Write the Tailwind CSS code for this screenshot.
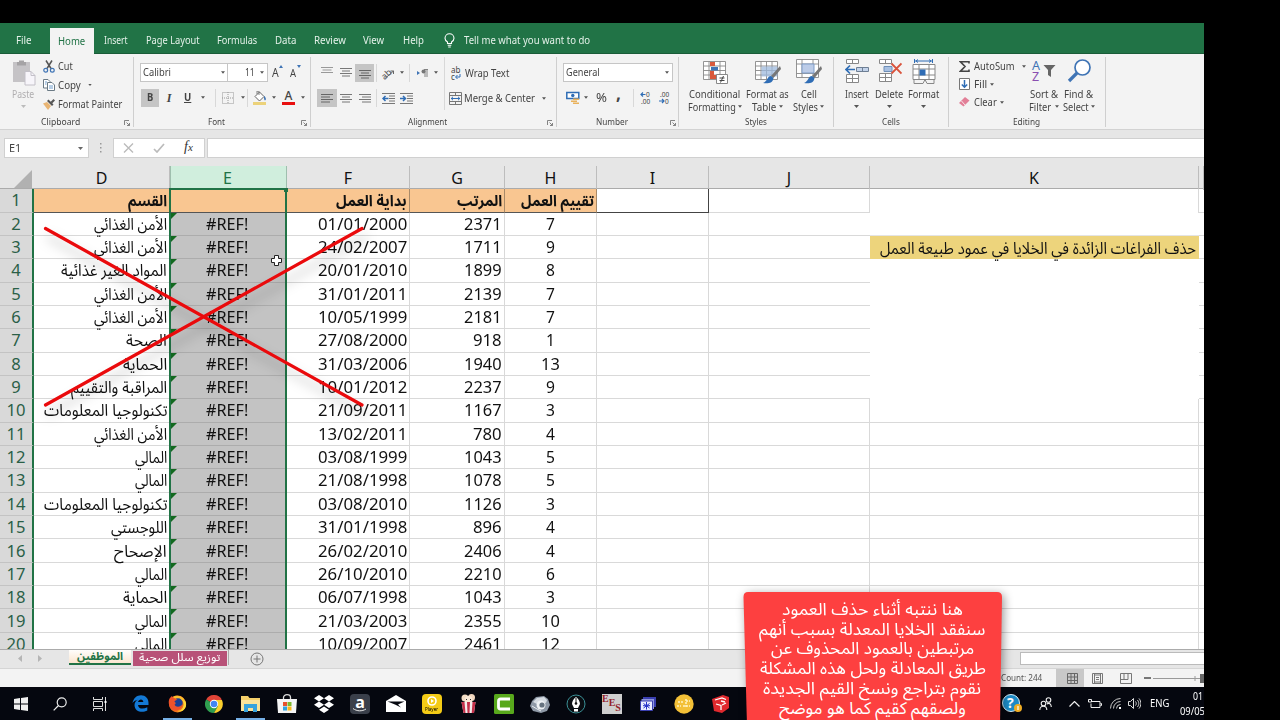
<!DOCTYPE html>
<html lang="en">
<head>
    <meta charset="UTF-8">
    <meta name="viewport" content="width=device-width, initial-scale=1.0">
    <title>Excel - Employees</title>
    <script src="https://cdn.jsdelivr.net/npm/@tailwindcss/browser@4"></script>
</head>
<body class="bg-black overflow-hidden font-['Noto_Sans','Noto_Sans_Arabic','DejaVu_Sans',sans-serif]">
<div class="relative w-[1280px] h-[720px] overflow-hidden pt-[23px]">
<div class="w-[1204px] h-[697px] flex flex-col overflow-hidden bg-[#e6e6e6]">

    <!-- Ribbon tabs -->
    <nav class="h-[31px] shrink-0 bg-[#217346] border-b border-[#1a5c38] flex items-end text-[11px] text-[#e4f1e9]">
        <div class="w-[50px] h-[26px] pl-4 pt-px flex items-center shrink-0"><span data-w="16">File</span></div>
        <div class="w-[44px] h-[26px] -mb-px bg-[#f3f3f3] text-[#217346] flex items-center justify-center shrink-0"><span data-w="27">Home</span></div>
        <div class="h-[26px] pl-[10px] pt-px flex items-center">
            <div class="w-[42px]"><span data-w="24">Insert</span></div>
            <div class="w-[71px]"><span data-w="54">Page Layout</span></div>
            <div class="w-[58px]"><span data-w="40">Formulas</span></div>
            <div class="w-[39px]"><span data-w="21">Data</span></div>
            <div class="w-[49px]"><span data-w="32">Review</span></div>
            <div class="w-[40px]"><span data-w="21">View</span></div>
            <div class="w-[41px]"><span data-w="21">Help</span></div>
            <div class="w-[20px]">
                <svg class="w-[11px] h-[15px]" viewBox="0 0 11 15" fill="none" stroke="#fff" stroke-width="1.1"><path d="M3.5 10.5V9C2 8 1 6.800 1 5.200a4.500 4.500 0 0 1 9 0C10 6.800 9 8 7.500 9v1.500zM3.700 12.300h3.600M4.200 14h2.600"/></svg>
            </div>
            <span data-w="126">Tell me what you want to do</span>
        </div>
    </nav>

    <!-- Ribbon -->
    <section class="h-[76px] shrink-0 bg-[#f3f3f3] border-b border-[#d2d2d2] flex pt-[3px] text-[11px] text-[#444]">

        <!-- Clipboard -->
        <div class="w-[134px] h-[70px] border-r border-[#cfcfcf] flex flex-col shrink-0">
            <div class="h-[58px] flex shrink-0">
                <div class="w-[43px] pl-[3px] pt-[2px] flex flex-col items-center text-[#b0aeb0]">
                    <svg class="w-[26px] h-[27px]" viewBox="0 0 26 27"><path d="M3 3h17v20H3z" fill="#c5c3c6"/><path d="M7 3h2V1.500h5V3h2v3.500H7z" fill="#a5a3a5"/><path d="M15 12.500h6l4 4V26H15z" fill="#f7f5fa" stroke="#c3c0c8"/><path d="M21 12.500v4h4" fill="none" stroke="#c3c0c8"/></svg>
                    <span class="leading-[15px]" data-w="22">Paste</span>
                    <svg class="w-[5px] h-[3px] mt-[4px]" viewBox="0 0 5 3"><path d="M0 0h5L2.500 3z" fill="#bbb"/></svg>
                </div>
                <div class="flex flex-col">
                    <div class="h-[18px] flex items-center">
                        <svg class="w-[12px] h-[13px] mr-[3px]" viewBox="0 0 12 13" fill="none"><path d="M3 .5l5 8M9 .5l-5 8" stroke="#555" stroke-width="1.500"/><circle cx="2.700" cy="10.200" r="1.900" stroke="#3f74b5" stroke-width="1.200"/><circle cx="9.300" cy="10.200" r="1.900" stroke="#3f74b5" stroke-width="1.200"/></svg>
                        <span data-w="15">Cut</span>
                    </div>
                    <div class="h-[20px] flex items-center">
                        <svg class="w-[12px] h-[12px] mr-[3px]" viewBox="0 0 12 12" fill="#fff" stroke="#6b7a85"><path d="M.5.5h4.500l2 2v6.500H.5z"/><path d="M4.500 3.500h4.500l2.500 2.500v5.500h-7z"/><path d="M6 7h4M6 9h4M2 3h2M2 5h1.500" stroke="#4d86c0" stroke-width=".8"/></svg>
                        <span data-w="23">Copy</span>
                        <svg class="w-[4px] h-[2px] ml-[7px]" viewBox="0 0 5 3"><path d="M0 0h5L2.500 3z" fill="#555"/></svg>
                    </div>
                    <div class="h-[18px] flex items-center">
                        <svg class="w-[12px] h-[11px] mr-[3px]" viewBox="0 0 12 11"><path d="M0 4.500L4 3l4 4-3 4z" fill="#e9b574"/><path d="M4 2l1.500-1.500 5 5L9 7z" fill="#555"/><path d="M7.500 3L10.500 0 12 1.500 9 4.500z" fill="#555"/></svg>
                        <span data-w="64">Format Painter</span>
                    </div>
                </div>
            </div>
            <div class="h-[15px] shrink-0 flex items-center justify-between pl-[41px] pr-[3px] text-[9.5px]">
                <span data-w="39">Clipboard</span>
                <svg class="w-[6px] h-[6px]" viewBox="0 0 6 6" fill="none" stroke="#777" stroke-width=".9"><path d="M.5 5V.5H5M2.500 2.500l3 3M5.500 3v2.500H3"/></svg>
            </div>
        </div>

        <!-- Font -->
        <div class="w-[177px] h-[70px] border-r border-[#cfcfcf] flex flex-col shrink-0">
            <div class="h-[31px] shrink-0 pl-[6px] flex items-center">
                <div class="w-[88px] h-[19px] bg-white border border-[#c6c6c6] flex items-center justify-between pl-[2px] pr-[2px]">
                    <span data-w="28">Calibri</span>
                    <svg class="w-[4px] h-[3px]" viewBox="0 0 5 3"><path d="M0 0h5L2.500 3z" fill="#555"/></svg>
                </div>
                <div class="w-[40px] h-[19px] bg-white border border-l-0 border-[#c6c6c6] flex items-center justify-end gap-[5px] pr-[3px]">
                    <span data-w="10">11</span>
                    <svg class="w-[4px] h-[3px]" viewBox="0 0 5 3"><path d="M0 0h5L2.500 3z" fill="#555"/></svg>
                </div>
                <div class="w-[19px] flex justify-center items-start"><span class="leading-[15px] text-[12px]" data-w="7">A</span><svg class="w-[4px] h-[3px]" viewBox="0 0 4 3"><path d="M0 3L2 0l2 3z" fill="#3f74b5"/></svg></div>
                <div class="w-[17px] flex justify-center items-start"><span class="leading-[15px] text-[11px]" data-w="6">A</span><svg class="w-[4px] h-[3px]" viewBox="0 0 4 3"><path d="M0 0L2 3l2-3z" fill="#3f74b5"/></svg></div>
            </div>
            <div class="h-[27px] shrink-0 pl-[7px] pb-[8px] pt-[0px] flex items-center">
                <div class="w-[18px] h-[18px] bg-[#c5c5c5] flex items-center justify-center font-bold"><span data-w="6">B</span></div>
                <div class="w-[20px] flex justify-center font-['Liberation_Serif',serif] italic font-bold text-[12px]">I</div>
                <div class="w-[17px] flex justify-center font-bold underline"><span data-w="7">U</span></div>
                <div class="w-[13px] flex justify-center"><svg class="w-[4px] h-[3px]" viewBox="0 0 5 3"><path d="M0 0h5L2.500 3z" fill="#555"/></svg></div>
                <div class="w-[7px] h-[18px] border-r border-[#d8d8d8]"></div>
                <div class="w-[24px] flex justify-center"><svg class="w-[12px] h-[12px]" viewBox="0 0 12 12" fill="none" stroke="#999"><path d="M.5.500h11v11H.5zM6 0v12M0 6h12" stroke-dasharray="1 1"/></svg></div>
                <div class="w-[6px] flex justify-center"><svg class="w-[4px] h-[3px]" viewBox="0 0 5 3"><path d="M0 0h5L2.500 3z" fill="#555"/></svg></div>
                <div class="w-[6px] h-[18px] border-r border-[#d8d8d8] -ml-[4px]"></div>
                <div class="w-[24px] flex justify-center"><svg class="w-[14px] h-[14px]" viewBox="0 0 14 14"><path d="M2 5.500L6.500 1l4.500 4.500L6.500 10z" fill="#fff" stroke="#666"/><path d="M4 3V0h2v4" fill="none" stroke="#666" stroke-width=".8"/><path d="M11.500 5c1.500 2 2 4 .5 4.500-1-.5-1-2-1-4z" fill="#3f74b5"/><path d="M0 11h13v3H0z" fill="#ecd27a"/></svg></div>
                <div class="w-[4px] flex justify-center"><svg class="w-[4px] h-[3px]" viewBox="0 0 5 3"><path d="M0 0h5L2.500 3z" fill="#555"/></svg></div>
                <div class="w-[25px] flex flex-col items-center"><span class="leading-[10px] h-[10px] text-[12px] font-medium" data-w="8">A</span><i class="block w-[13px] h-[3px] mt-px bg-[#e80f0f]"></i></div>
                <svg class="w-[4px] h-[3px]" viewBox="0 0 5 3"><path d="M0 0h5L2.500 3z" fill="#555"/></svg>
            </div>
            <div class="h-[15px] shrink-0 flex items-center justify-between pl-[74px] pr-[3px] text-[9.5px]">
                <span data-w="17">Font</span>
                <svg class="w-[6px] h-[6px]" viewBox="0 0 6 6" fill="none" stroke="#777" stroke-width=".9"><path d="M.5 5V.5H5M2.500 2.500l3 3M5.500 3v2.500H3"/></svg>
            </div>
        </div>

        <!-- Alignment -->
        <div class="w-[246px] h-[70px] border-r border-[#cfcfcf] flex flex-col shrink-0">
            <div class="h-[58px] shrink-0 flex">
                <div class="w-[134px] h-[53px] border-r border-[#d8d8d8] flex flex-col">
                    <div class="h-[29px] pl-[6px] pt-[2px] flex items-center">
                        <div class="w-[20px] h-[18px] flex justify-center pt-[3px]"><svg class="w-[12px] h-[7px]" viewBox="0 0 12 7"><path d="M0 .5h12M1.500 3h9M0 5.500h12" stroke="#999"/></svg></div>
                        <div class="w-[18px] h-[18px] flex justify-center items-center"><svg class="w-[12px] h-[9px]" viewBox="0 0 12 9"><path d="M0 .5h12M2 3h8M0 5.500h12M2 8h8" stroke="#777"/></svg></div>
                        <div class="w-[19px] h-[18px] bg-[#c5c5c5] flex justify-center items-end pb-[3px]"><svg class="w-[12px] h-[9px]" viewBox="0 0 12 9"><path d="M0 .5h12M2 3h8M0 5.500h12M2 8h8" stroke="#666"/></svg></div>
                        <div class="w-[3px] h-[18px] border-r border-[#d8d8d8]"></div>
                        <div class="w-[23px] flex justify-center"><svg class="w-[13px] h-[12px] overflow-visible" viewBox="0 0 13 12"><text x="-1" y="10" font-size="9" fill="#555" transform="rotate(-42 5 7)">ab</text><path d="M3 11.500l8.500-7.500M8.500 4h3v3" fill="none" stroke="#666"/></svg></div>
                        <svg class="w-[4px] h-[3px]" viewBox="0 0 5 3"><path d="M0 0h5L2.500 3z" fill="#555"/></svg>
                        <div class="w-[6px] h-[18px] border-r border-[#d8d8d8]"></div>
                        <div class="w-[24px] flex justify-center"><svg class="w-[11px] h-[8px]" viewBox="0 0 11 8"><path d="M0 2l3 2-3 2z" fill="#3f74b5"/><path d="M8 8V.5M10 8V.5M11 .5H7" stroke="#777" fill="none" stroke-width=".9"/><circle cx="6.500" cy="2.500" r="2" fill="#777"/></svg></div>
                        <svg class="w-[4px] h-[3px]" viewBox="0 0 5 3"><path d="M0 0h5L2.500 3z" fill="#555"/></svg>
                    </div>
                    <div class="h-[24px] pl-[6px] flex items-center">
                        <div class="w-[20px] h-[18px] bg-[#c5c5c5] flex justify-center items-center"><svg class="w-[12px] h-[9px]" viewBox="0 0 12 9"><path d="M0 .5h12M0 3h9M0 5.500h12M0 8h9" stroke="#666"/></svg></div>
                        <div class="w-[18px] flex justify-center"><svg class="w-[12px] h-[9px]" viewBox="0 0 12 9"><path d="M0 .5h12M2 3h8M0 5.500h12M2 8h8" stroke="#777"/></svg></div>
                        <div class="w-[19px] flex justify-center"><svg class="w-[12px] h-[9px]" viewBox="0 0 12 9"><path d="M0 .5h12M3 3h9M0 5.500h12M3 8h9" stroke="#777"/></svg></div>
                        <div class="w-[3px] h-[18px] border-r border-[#d8d8d8]"></div>
                        <div class="w-[23px] flex justify-center"><svg class="w-[13px] h-[11px]" viewBox="0 0 13 11"><path d="M0 .5h13M7 3h6M7 5.500h6M7 8h6M0 10.500h13" stroke="#777"/><path d="M6.500 5.500H1M3.500 3L1 5.500 3.500 8" fill="none" stroke="#2f6db5" stroke-width="1.500"/></svg></div>
                        <svg class="w-[13px] h-[11px]" viewBox="0 0 13 11"><path d="M0 .5h13M7 3h6M7 5.500h6M7 8h6M0 10.500h13" stroke="#777"/><path d="M0 5.500h5.500M3 3l2.500 2.500L3 8" fill="none" stroke="#2f6db5" stroke-width="1.500"/></svg>
                    </div>
                </div>
                <div class="flex flex-col pl-[5px]">
                    <div class="h-[29px] pt-[3px] flex items-center">
                        <svg class="w-[11px] h-[13px] mr-[4px] overflow-visible" viewBox="0 0 11 13"><text x="1" y="6" font-size="8" fill="#444">ab</text><text x="1" y="12.500" font-size="8" fill="#444">c</text><path d="M10 7v3H6M7.500 8L5.500 10l2 2" fill="none" stroke="#2f6db5"/></svg>
                        <span data-w="44">Wrap Text</span>
                    </div>
                    <div class="h-[24px] flex items-center">
                        <svg class="w-[13px] h-[13px] mr-[2px] -ml-px" viewBox="0 0 13 13" fill="none" stroke="#777"><path d="M.5.500h12v12H.5zM.5 3.500h12M.5 9.500h12M6.500 0v3.500M6.500 9.500V13"/><path d="M2 6.500h9M4 4.800L2.200 6.500 4 8.200M9 4.800l1.800 1.700L9 8.200" stroke="#2f6db5"/></svg>
                        <span data-w="71">Merge &amp; Center</span>
                        <svg class="w-[4px] h-[3px] ml-[7px]" viewBox="0 0 5 3"><path d="M0 0h5L2.500 3z" fill="#555"/></svg>
                    </div>
                </div>
            </div>
            <div class="h-[15px] shrink-0 flex items-center justify-between pl-[97px] pr-[3px] text-[9.500px]">
                <span data-w="39">Alignment</span>
                <svg class="w-[6px] h-[6px]" viewBox="0 0 6 6" fill="none" stroke="#777" stroke-width=".9"><path d="M.5 5V.5H5M2.500 2.500l3 3M5.500 3v2.500H3"/></svg>
            </div>
        </div>

        <!-- Number -->
        <div class="w-[122px] h-[70px] border-r border-[#cfcfcf] flex flex-col shrink-0">
            <div class="h-[31px] shrink-0 pl-[6px] flex items-center">
                <div class="w-[110px] h-[19px] bg-white border border-[#c6c6c6] flex items-center justify-between pl-[2px] pr-[3px]">
                    <span data-w="34">General</span>
                    <svg class="w-[4px] h-[3px]" viewBox="0 0 5 3"><path d="M0 0h5L2.500 3z" fill="#555"/></svg>
                </div>
            </div>
            <div class="h-[27px] shrink-0 pl-[9px] pb-[8px] flex items-center">
                <svg class="w-[14px] h-[13px]" viewBox="0 0 14 13"><path d="M.8 1.500h12v6H.8z" fill="#fff" stroke="#2f6db5" stroke-width="1.500"/><circle cx="6.800" cy="4.500" r="1.700" fill="#2f6db5"/><path d="M7 7.500h6v1.500H7zM5 9.500h6V11H5zM7 11.500h6V13H7z" fill="#e9b25c"/></svg>
                <svg class="w-[4px] h-[3px] ml-[4px]" viewBox="0 0 5 3"><path d="M0 0h5L2.500 3z" fill="#555"/></svg>
                <span class="text-[12px] ml-[8px]" data-w="11">%</span>
                <span class="w-[26px] pl-[9px] text-[17px] leading-[10px] h-[18px] font-bold">,</span>
                <div class="w-px h-[18px] bg-[#d8d8d8]"></div>
                <svg class="w-[11px] h-[13px] ml-[6px] overflow-visible" viewBox="0 0 11 13"><text x="6" y="6" font-size="6.500" fill="#444">0</text><text x="1" y="12.500" font-size="6.500" fill="#444">.00</text><path d="M5.500 3.500H1M3 1.500L1 3.500l2 2" fill="none" stroke="#2f6db5" stroke-width="1.200"/></svg>
                <svg class="w-[11px] h-[13px] ml-[8px] overflow-visible" viewBox="0 0 11 13"><text x="1" y="6" font-size="6.500" fill="#444">.00</text><text x="6" y="12.500" font-size="6.500" fill="#444">0</text><path d="M0 10h4.500M3 8l2 2-2 2" fill="none" stroke="#2f6db5" stroke-width="1.200"/></svg>
            </div>
            <div class="h-[15px] shrink-0 flex items-center justify-between pl-[39px] pr-[2px] text-[9.500px]">
                <span data-w="32">Number</span>
                <svg class="w-[6px] h-[6px]" viewBox="0 0 6 6" fill="none" stroke="#777" stroke-width=".9"><path d="M.5 5V.5H5M2.500 2.500l3 3M5.500 3v2.500H3"/></svg>
            </div>
        </div>

        <!-- Styles -->
        <div class="w-[155px] h-[70px] border-r border-[#cfcfcf] flex flex-col shrink-0">
            <div class="h-[58px] shrink-0 pl-[7px] pt-[2px] flex leading-[13px]">
                <div class="w-[58px] flex flex-col items-center">
                    <svg class="w-[25px] h-[25px] mb-[3px]" viewBox="0 0 25 25"><path d="M.5 2.500h22v18H.5zM.5 7h22M.5 11.500h22M.5 16h22M6 2.500v18M17 2.500v18" fill="#fff" stroke="#888" stroke-width=".9"/><path d="M7 3h5v4H7zM7 12h4v4H7z" fill="#d9593c"/><path d="M8 8h7v3.500H8z" fill="#3f74b5"/><path d="M7 16h7v4H7z" fill="#d9593c"/><path d="M13.500 15.500h11v9h-11z" fill="#fff" stroke="#888"/><path d="M16.500 19h5M16.500 21.500h5M20.500 17l-3 6.500" stroke="#444"/></svg>
                    <span data-w="51">Conditional</span>
                    <div class="flex items-center gap-[3px]"><span data-w="48">Formatting</span><svg class="w-[4px] h-[3px]" viewBox="0 0 5 3"><path d="M0 0h5L2.500 3z" fill="#555"/></svg></div>
                </div>
                <div class="w-[47px] flex flex-col items-center">
                    <svg class="w-[26px] h-[25px] mb-[3px]" viewBox="0 0 26 25"><path d="M.5 2.500h22v18H.5zM.5 7h22M.5 11.500h22M.5 16h22M6 2.500v18M11.500 2.500v18M17 2.500v18" fill="#fff" stroke="#888" stroke-width=".9"/><path d="M6.500 7.500h16v10h-16z" fill="#9db9dd" opacity=".75"/><path d="M25 7l-9 10 2.500 2L26 10z" fill="#777"/><path d="M16 17c-4 0-3 5-8 7 5 1 10 0 10.500-5z" fill="#2f6db5"/></svg>
                    <span data-w="43">Format as</span>
                    <div class="flex items-center gap-[3px]"><span data-w="24">Table</span><svg class="w-[4px] h-[3px]" viewBox="0 0 5 3"><path d="M0 0h5L2.500 3z" fill="#555"/></svg></div>
                </div>
                <div class="w-[35px] flex flex-col items-center">
                    <svg class="w-[26px] h-[25px] mb-[3px]" viewBox="0 0 26 25"><path d="M.5.500h22v18H.5zM.5 5h22M.5 14.500h22M6 .5v18M17 .5v18" fill="#fff" stroke="#888" stroke-width=".9"/><path d="M6 5h12v9H6z" fill="#bccce8" stroke="#7f9dc8"/><path d="M25 7l-9 10 2.500 2L26 10z" fill="#777"/><path d="M16 17c-4 0-3 5-8 7 5 1 10 0 10.500-5z" fill="#2f6db5"/></svg>
                    <span data-w="16">Cell</span>
                    <div class="flex items-center gap-[3px]"><span data-w="25">Styles</span><svg class="w-[4px] h-[3px]" viewBox="0 0 5 3"><path d="M0 0h5L2.500 3z" fill="#555"/></svg></div>
                </div>
            </div>
            <div class="h-[15px] shrink-0 flex items-center justify-center text-[9.500px]"><span data-w="22">Styles</span></div>
        </div>

        <!-- Cells -->
        <div class="w-[115px] h-[70px] border-r border-[#cfcfcf] flex flex-col shrink-0">
            <div class="h-[58px] shrink-0 pl-[7px] pt-[2px] flex leading-[13px]">
                <div class="w-[31px] flex flex-col items-center">
                    <svg class="w-[24px] h-[25px] mb-[3px]" viewBox="0 0 24 25"><path d="M1.500.500h12v4h-12zM7.500.500v4M1.500 15.500h12v8h-12zM7.500 15.500v8M1.500 19.500h12" fill="#fff" stroke="#888"/><path d="M11.500 8.500h12v4h-12zM17.500 8.500v4" fill="#c3d3ea" stroke="#6e7f94"/><path d="M10 10.500H1M5 6.500l-4 4 4 4" fill="none" stroke="#2f6db5" stroke-width="1.700"/></svg>
                    <span data-w="24">Insert</span>
                    <svg class="w-[5px] h-[3px] mt-[5px]" viewBox="0 0 5 3"><path d="M0 0h5L2.500 3z" fill="#555"/></svg>
                </div>
                <div class="w-[35px] flex flex-col items-center">
                    <svg class="w-[24px] h-[25px] mb-[3px]" viewBox="0 0 24 25"><path d="M1.500.500h12v4h-12zM7.500.500v4M1.500 14.500h12v8h-12zM7.500 14.500v8M1.500 18.500h12" fill="#fff" stroke="#888"/><path d="M6 7.500h8v5H6z" fill="#a9c1e2" stroke="#6e8fb8"/><path d="M13.500 4.500l10 10M23.500 4.500l-10 10" stroke="#d9533c" stroke-width="1.800"/></svg>
                    <span data-w="28">Delete</span>
                    <svg class="w-[5px] h-[3px] mt-[5px]" viewBox="0 0 5 3"><path d="M0 0h5L2.500 3z" fill="#555"/></svg>
                </div>
                <div class="w-[33px] flex flex-col items-center">
                    <svg class="w-[24px] h-[25px] mb-[3px]" viewBox="0 0 24 25"><path d="M1 5.500h22v15H1zM1 10h22M1 16h22M7 5.500v15M17 5.500v15" fill="#fff" stroke="#888"/><path d="M7.500 10.500h6v6h-6z" fill="#2f6db5"/><path d="M2.500 0v4M20.500 0v4M3 2h17M6 .5L4 2l2 1.500M17 .5L19 2l-2 1.500" fill="none" stroke="#2f6db5"/><path d="M2 20.500v4h9l2-4 2 4h7v-4" fill="none" stroke="#888"/></svg>
                    <span data-w="31">Format</span>
                    <svg class="w-[5px] h-[3px] mt-[5px]" viewBox="0 0 5 3"><path d="M0 0h5L2.500 3z" fill="#555"/></svg>
                </div>
            </div>
            <div class="h-[15px] shrink-0 flex items-center justify-center text-[9.500px]"><span data-w="18">Cells</span></div>
        </div>

        <!-- Editing -->
        <div class="w-[157px] h-[70px] border-r border-[#cfcfcf] flex flex-col shrink-0">
            <div class="h-[58px] shrink-0 pl-[10px] flex">
                <div class="w-[68px] flex flex-col shrink-0">
                    <div class="h-[18px] flex items-center"><svg class="w-[11px] h-[11px] mr-[4px]" viewBox="0 0 11 11" fill="none"><path d="M10 2.500V.8H1.500l4.500 4.700-4.500 4.700H10V8.500" stroke="#444" stroke-width="1.600"/></svg><span data-w="41">AutoSum</span><svg class="w-[4px] h-[3px] ml-[7px] shrink-0" viewBox="0 0 5 3"><path d="M0 0h5L2.500 3z" fill="#555"/></svg></div>
                    <div class="h-[18px] flex items-center"><svg class="w-[11px] h-[12px] mr-[4px]" viewBox="0 0 11 12" fill="none"><path d="M.5.500h10v11H.5z" fill="#fff" stroke="#777"/><path d="M5.500 2v7M2.800 6.500l2.700 2.700 2.700-2.700" stroke="#2f6db5" stroke-width="1.500"/></svg><span data-w="13">Fill</span><svg class="w-[4px] h-[3px] ml-[3px]" viewBox="0 0 5 3"><path d="M0 0h5L2.500 3z" fill="#555"/></svg></div>
                    <div class="h-[18px] flex items-center"><svg class="w-[11px] h-[10px] mr-[4px]" viewBox="0 0 11 10"><path d="M0 6l6-6 4.500 3.500-6 6z" fill="#e27f97"/><path d="M2.500 4l3.500 4" stroke="#fff" stroke-width=".8"/></svg><span data-w="23">Clear</span><svg class="w-[4px] h-[3px] ml-[3px]" viewBox="0 0 5 3"><path d="M0 0h5L2.500 3z" fill="#555"/></svg></div>
                </div>
                <div class="w-[34px] pt-[2px] flex flex-col items-center leading-[13px] shrink-0">
                    <svg class="w-[24px] h-[25px] mb-[3px] overflow-visible" viewBox="0 0 24 25"><text x="0" y="10.500" font-size="12.500" fill="#3f74b5">A</text><text x="0" y="22" font-size="12.500" fill="#8a4fb0">Z</text><path d="M11.500 6h12l-4.500 5v7l-3-2v-5z" fill="#666"/></svg>
                    <span data-w="28">Sort &amp;</span>
                    <div class="flex items-center gap-[3px]"><span data-w="22">Filter</span><svg class="w-[4px] h-[3px]" viewBox="0 0 5 3"><path d="M0 0h5L2.500 3z" fill="#555"/></svg></div>
                </div>
                <div class="w-[36px] pt-[2px] flex flex-col items-center leading-[13px] shrink-0">
                    <svg class="w-[24px] h-[25px] mb-[3px]" viewBox="0 0 24 25"><circle cx="15.500" cy="8.500" r="7.500" fill="#fff" stroke="#3f74b5" stroke-width="1.700"/><path d="M10 14l-8 8" stroke="#3f74b5" stroke-width="3.200"/></svg>
                    <span data-w="29">Find &amp;</span>
                    <div class="flex items-center gap-[3px]"><span data-w="26">Select</span><svg class="w-[4px] h-[3px]" viewBox="0 0 5 3"><path d="M0 0h5L2.500 3z" fill="#555"/></svg></div>
                </div>
            </div>
            <div class="h-[15px] shrink-0 flex items-center justify-center text-[9.500px]"><span data-w="27">Editing</span></div>
        </div>
    </section>

    <!-- Formula bar -->
    <section class="h-[36px] shrink-0 flex items-start pt-[8px] pl-[4px]">
        <div class="w-[85px] h-[20px] bg-white border border-[#d0d0d0] flex items-center justify-between pl-[4px] pr-[5px] text-[10px] text-[#444]">
            <span data-w="12">E1</span>
            <svg class="w-[5px] h-[3px]" viewBox="0 0 5 3"><path d="M0 0h5L2.500 3z" fill="#666"/></svg>
        </div>
        <div class="w-[24px] h-[20px] flex items-center justify-center"><svg class="w-[2px] h-[10px]" viewBox="0 0 2 10"><path d="M0 0h1.500v1.500H0zM0 4h1.500v1.500H0zM0 8h1.500v1.500H0z" fill="#999"/></svg></div>
        <div class="w-[92px] h-[20px] bg-white border border-[#d0d0d0] flex items-center pl-[9px]">
            <svg class="w-[11px] h-[10px]" viewBox="0 0 11 10"><path d="M1 .5l9 9M10 .5l-9 9" stroke="#bbb" stroke-width="1.400"/></svg>
            <svg class="w-[12px] h-[10px] ml-[19px]" viewBox="0 0 12 10"><path d="M1 6l3 3 7-8" fill="none" stroke="#bbb" stroke-width="1.700"/></svg>
            <span class="ml-[19px] font-['Liberation_Serif',serif] italic text-[14px] leading-[16px] pb-[2px] text-[#333]">f<span class="text-[11px]">x</span></span>
        </div>
        <div class="flex-1 ml-[2px] h-[20px] bg-white border border-r-0 border-[#d0d0d0]"></div>
    </section>

    <!-- Sheet -->
    <main class="relative h-[484px] shrink-0 overflow-hidden bg-white border-b border-[#ababab] text-[16.600px] text-[#111]">
        <div id="heads" class="h-[23.200px] grid grid-cols-[34px_136px_117px_123px_95px_92px_112px_161px_329px_5px] bg-[#e6e6e6] border-b border-[#ababab] text-[16px]"></div>
        <div id="rows"></div>
        <!-- selection frame of column E -->
        <div class="absolute left-[169px] top-[22px] w-[118px] h-[480px] border-2 border-[#217346]"></div>
        <div class="absolute left-[284px] top-[22px] w-[4px] h-[4px] bg-[#217346]"></div>
        <!-- deletion cross -->
        <svg class="absolute left-0 top-0 w-[420px] h-[300px] drop-shadow-[3px_9px_6px_rgba(0,0,0,0.25)]" viewBox="0 0 420 300" fill="none" stroke="#ea0a0c" stroke-width="3.200" stroke-linecap="round"><path d="M45.500 62.500L362 239M45.500 239L362 62.500"/></svg>
        <svg class="absolute left-[271px] top-[89px] w-[11px] h-[11px]" viewBox="0 0 11 11"><path d="M3.500.500h4v3h3v4h-3v3h-4v-3h-3v-4h3z" fill="#fff" stroke="#222"/></svg>
    </main>

    <!-- Sheet tabs -->
    <section class="h-[18px] shrink-0 flex items-start bg-[#e6e6e6] text-[11px]">
        <svg class="w-[24px] h-[7px] ml-[18px] mt-[5px]" viewBox="0 0 24 7"><path d="M4 0v7L0 3.500zM20 0v7l4-3.500z" fill="#b5b5b5"/></svg>
        <div class="w-[62px] h-[16px] ml-[27px] -mt-px bg-gradient-to-b from-white to-[#fbe6d0] border-b-2 border-[#217346] text-[#217346] font-bold flex items-center justify-center leading-[14px]"><span data-w="46">الموظفين</span></div>
        <div class="w-[94px] h-[15px] ml-[2px] mt-px bg-[#b85278] text-white flex items-center justify-center leading-[10px] pb-[3px]"><span data-w="81">توزيع سلل صحية</span></div>
        <div class="w-[2px] h-[15px] border-r border-[#aaa]"></div>
        <svg class="w-[14px] h-[14px] ml-[21px] mt-[2px]" viewBox="0 0 14 14" fill="none" stroke="#777"><circle cx="7" cy="7" r="6"/><path d="M7 3.500v7M3.500 7h7"/></svg>
        <div class="w-[184px] h-[13px] ml-auto mt-[2px] bg-white border border-r-0 border-[#bbb]"></div>
    </section>

    <!-- Status bar -->
    <section class="h-[19px] shrink-0 flex items-center bg-[#f3f3f3] border-t border-[#d5d5d5] text-[9.500px] text-[#555] pl-[1001px]">
        <div class="w-[59px] shrink-0"><span data-w="41">Count: 244</span></div>
        <div class="w-[24px] h-[18px] -ml-[4px] pl-[4px] box-content bg-[#c8c8c8] flex items-center justify-center shrink-0"><svg class="w-[11px] h-[11px]" viewBox="0 0 11 11" fill="none" stroke="#666"><path d="M.5.500h10v10H.5zM.5 4h10M.5 7.500h10M4 .5v10M7.500.500v10"/></svg></div>
        <svg class="w-[11px] h-[11px] ml-[8px] shrink-0" viewBox="0 0 11 11" fill="none" stroke="#777"><path d="M.5.500h10v10H.5zM2.500 1v9.500M8.500 1v9.500M2.500 2h6M4 4.500h3M4 6.500h3M2.500 9h6"/></svg>
        <svg class="w-[12px] h-[11px] ml-[17px] shrink-0" viewBox="0 0 12 11" fill="none" stroke="#777"><path d="M.5.500h11v10H.5zM4 .5v6H.5M4 6.500h4V.5"/></svg>
        <div class="w-[7px] h-[2px] bg-[#777] ml-[12px] shrink-0"></div>
        <svg class="w-[51px] h-[10px] ml-[2px] shrink-0" viewBox="0 0 51 10"><path d="M0 5.500h51M42 3v5" stroke="#999" fill="none"/><path d="M47 1h4v9h-4z" fill="#666"/></svg>
    </section>

    <!-- Taskbar -->
    <footer class="relative h-[33px] shrink-0 bg-[#05070f] text-white">
        <div id="taskbar" class="h-[33px] pl-[2px] flex items-center">
            <div class="w-[37px] flex justify-center shrink-0"><svg class="w-[14px] h-[14px]" viewBox="0 0 14 14" fill="#f0f0f0"><path d="M0 2l6-1v5.600H0zM7 .9L14 0v6.600H7zM0 7.500h6V13l-6-1zM7 7.500h7V14l-7-1z"/></svg></div>
            <div class="w-[41px] flex justify-center shrink-0"><svg class="w-[14px] h-[14px]" viewBox="0 0 14 14" fill="none" stroke="#eee" stroke-width="1.200"><circle cx="8.700" cy="5.300" r="4.500"/><path d="M5.500 8.500L.7 13.300"/></svg></div>
            <div class="w-[40px] flex justify-center shrink-0"><svg class="w-[14px] h-[14px]" viewBox="0 0 14 14" fill="none" stroke="#ddd"><path d="M.5 0v2.500h9V0M.5 4.500h9v5h-9zM.5 14v-2.500h9V14M12.500 0v14"/><path d="M11.500 4h2v2h-2z" fill="#fff" stroke="none"/></svg></div>
            <div class="w-[40px] flex justify-center shrink-0"><svg class="w-[17px] h-[17px]" viewBox="0 0 17 17"><path d="M.5 8C1.500 3 5 .3 9 .3c4.500 0 7.500 3.200 7.500 7.700v2H6c.3 4 5 4.500 9.300 2.300v3.200C10 18.500 2.500 16.500 2.500 10c0-2.500 1.500-4.300 3.500-5.200C3.800 5.200 1.800 6.200.5 8zM6 7h5.300c0-3.500-4.500-3.500-5.300 0z" fill="#1379d6"/></svg></div>
            <div class="w-[35px] flex justify-center shrink-0"><svg class="w-[19px] h-[18px]" viewBox="0 0 19 18"><circle cx="9.500" cy="9" r="8.500" fill="#f2731c"/><path d="M4 2.500C7 0 13 0 16 4c2 3 1.500 6 0 8 .5-4-1-6-3-7z" fill="#fbc02d"/><circle cx="10" cy="8" r="4.700" fill="#1b3f94"/><path d="M1 5c1-3 2.500-3 2.500-4 2 1.500 3.500 3 6 3.500-1 1-3 1-3 2.500 2 .5 1 2.500 0 2.500 1 3 6 3 7 0 1 4-3 6-7 6C2 15 0 9 1 5z" fill="#f0522a"/><path d="M15 6c2 5-1 10-6 10 5 2 10-2 9-8-.5-2-1.500-3-3-2z" fill="#fdd835"/></svg></div>
            <div class="w-[38px] flex justify-center shrink-0"><svg class="w-[18px] h-[18px]" viewBox="0 0 18 18"><path d="M9 9L1.200 4.500A9 9 0 0 1 16.800 4.500z" fill="#e04437"/><path d="M9 9L1.200 4.500A9 9 0 0 0 9 18l4-6.500z" fill="#2f9e4f"/><path d="M9 5h7.900A9 9 0 0 1 9 18l4-7z" fill="#fbcf2d"/><circle cx="9" cy="9" r="4.200" fill="#fff"/><circle cx="9" cy="9" r="3.300" fill="#4285f4"/></svg></div>
            <div class="w-[35px] flex justify-center shrink-0"><svg class="w-[19px] h-[16px]" viewBox="0 0 19 16"><path d="M0 0h7l1.500 2H19v13H0z" fill="#f4cf6a"/><path d="M0 4h19v11H0z" fill="#fbe39a"/><path d="M3 8h13v8h-4v-4H7v4H3z" fill="#37a3dd"/></svg></div>
            <div class="w-[38px] flex justify-center shrink-0"><svg class="w-[20px] h-[20px]" viewBox="0 0 20 20"><path d="M6.500 6V3.500a3.500 2.800 0 0 1 7 0V6" fill="none" stroke="#ddd" stroke-width="1.300"/><path d="M0 5h20l-1 14H1z" fill="#f5f5f5"/><path d="M6 8h4v4H6z" fill="#e8512c"/><path d="M10.500 8h4v4h-4z" fill="#7eb82e"/><path d="M6 12.500h4v4H6z" fill="#31a2df"/><path d="M10.500 12.500h4v4h-4z" fill="#fab818"/></svg></div>
            <div class="w-[36px] flex justify-center shrink-0"><svg class="w-[20px] h-[18px]" viewBox="0 0 20 18" fill="#fff"><path d="M5 0l5 3.300-5 3.200L0 3.300zM15 0l5 3.300-5 3.200-5-3.200zM5 6.500l5 3.300-5 3.200-5-3.200zM15 6.500l5 3.300-5 3.200-5-3.200zM10 11.500l5 3.200-5 3.300-5-3.300z"/></svg></div>
            <div class="w-[36px] flex justify-center shrink-0"><div class="relative w-[20px] h-[20px] rounded-sm bg-[#3a3f4a] flex items-center justify-center font-bold text-[16px] leading-[14px] pb-[4px]">a<svg class="absolute left-[3px] bottom-[2px] w-[14px] h-[4px]" viewBox="0 0 14 4" fill="none" stroke="#e8e8e8"><path d="M0 .5c4 3 9 3 13 .5"/></svg></div></div>
            <div class="w-[36px] flex justify-center shrink-0"><svg class="w-[20px] h-[17px]" viewBox="0 0 20 17"><path d="M0 6l10-6 10 6v11H0z" fill="#fff"/><path d="M1.500 6.500h17L12 9.500l3 3-6-3z" fill="#05070f"/></svg></div>
            <div class="w-[36px] flex justify-center shrink-0"><div class="w-[20px] h-[20px] bg-[#f4cb16] rounded-sm flex flex-col items-center pt-[2px]"><svg class="w-[10px] h-[10px]" viewBox="0 0 10 10"><circle cx="5" cy="5" r="4" fill="none" stroke="#fff" stroke-width="1.600"/><path d="M4 3l3 2-3 2z" fill="#fff"/></svg><span class="text-[5.500px] leading-[7px] text-black" data-w="13">Player</span></div></div>
            <div class="w-[36px] flex justify-center shrink-0"><svg class="w-[15px] h-[19px]" viewBox="0 0 15 19"><circle cx="4" cy="4" r="3.500" fill="#f3dcc4"/><circle cx="10.500" cy="3.500" r="3.500" fill="#f0d5bd"/><circle cx="7.500" cy="6" r="4" fill="#fae9d8"/><path d="M.5 8h14L13 19H2.500z" fill="#f4ecec"/><path d="M.5 8h3l1 11h-2zM6 8h3l-.5 11h-2zM11.500 8h3L13 19h-2.300z" fill="#c4304a"/><path d="M5 5h1v1H5zM9 5h1v1H9z" fill="#333"/></svg></div>
            <div class="w-[36px] flex justify-center shrink-0"><svg class="w-[20px] h-[20px]" viewBox="0 0 20 20"><rect width="20" height="20" rx="1.500" fill="#58a81c"/><path d="M16 5H6.500a2 2 0 0 0-2 2v6a2 2 0 0 0 2 2H16" fill="none" stroke="#fff" stroke-width="2.800"/></svg></div>
            <div class="w-[36px] flex justify-center shrink-0"><svg class="w-[20px] h-[18px]" viewBox="0 0 20 18"><path d="M2 6L6 2l8-1 4 3 2 6-3 6-6 2-8-2-3-5z" fill="#8e98a6"/><path d="M3 7l4-4 7-1 3 3-1 3-5-1-4 2z" fill="#d5dbe2"/><circle cx="11" cy="10" r="4.500" fill="#eef1f4"/><circle cx="12" cy="10" r="2.600" fill="#66727f"/><path d="M2 11l5 3 4 2" stroke="#e8ecf0" fill="none"/></svg></div>
            <div class="w-[36px] flex justify-center shrink-0"><svg class="w-[20px] h-[20px]" viewBox="0 0 20 20"><circle cx="10" cy="10" r="9" fill="#0a0d12" stroke="#3a8f95"/><path d="M10 3c2.500 2 4 4.500 4 7L12 14H8l-2-4c0-2.500 1.500-5 4-7zM8 15h4v2.500H8z" fill="#fff"/><path d="M10 4v5" stroke="#111"/><circle cx="10" cy="9.500" r="1.300" fill="#111"/></svg></div>
            <div class="w-[36px] flex justify-center shrink-0"><div class="w-[20px] h-[20px] bg-[#cfcfcf] flex font-['Liberation_Serif',serif] font-bold text-[10px] leading-[10px] text-[#94222b]"><span>E</span><span class="mt-[4px]">E</span><span class="mt-[9px]">S</span></div></div>
            <div class="w-[36px] flex justify-center shrink-0"><svg class="w-[16px] h-[14px]" viewBox="0 0 16 14"><path d="M3 0h13v10H3z" fill="#3a3fb0"/><path d="M1.500 2H14v10H1.500z" fill="#8f97dc"/><path d="M.5 4h12v9.500H.5z" fill="#e9ecff" stroke="#3a3fb0"/><path d="M6.500 5v7.500M3.500 6.500l6 4.500M9.500 6.500l-6 4.500M3 8.700h7" stroke="#2430c8"/></svg></div>
            <div class="w-[36px] flex justify-center shrink-0"><svg class="w-[20px] h-[20px]" viewBox="0 0 20 20"><circle cx="10" cy="10" r="9.700" fill="#f3c037"/><path d="M4 8h6M12 7h4M3 12h4M9 12h7M12 5v9" stroke="#fff2c2" stroke-width="1.500" stroke-dasharray="2 1"/></svg></div>
            <div class="w-[36px] flex justify-center shrink-0"><svg class="w-[17px] h-[18px]" viewBox="0 0 17 18"><path d="M0 4l11-4 6 2v11l-7 5-8-2z" fill="#e0292e"/><path d="M3 5l7-2 4 1.500M4 9l5 1.500V15M10 10l4-2M9 6l4 1" fill="none" stroke="#fff" stroke-width="1.300"/></svg></div>
            <svg class="w-[20px] h-[19px] ml-[264px] shrink-0 overflow-visible" viewBox="0 0 20 19"><circle cx="9" cy="9" r="8.500" fill="#1d8bc6" stroke="#d7eef8"/><text x="5" y="14" font-size="14" font-weight="700" fill="#fff">?</text><circle cx="16" cy="14" r="4" fill="#f0ad24"/><path d="M16 12v4" stroke="#fff" stroke-width="1.200"/></svg>
            <svg class="w-[13px] h-[14px] ml-[17px] shrink-0" viewBox="0 0 13 14" fill="none" stroke="#eee" stroke-width="1.100"><circle cx="9.500" cy="3" r="2.300"/><circle cx="4.500" cy="6.500" r="2.300"/><path d="M.8 13c0-5 7-5 7 0M8 7c2-1.500 4.200 0 4.300 3"/></svg>
            <svg class="w-[11px] h-[6px] ml-[17px] shrink-0" viewBox="0 0 11 6" fill="none" stroke="#eee" stroke-width="1.200"><path d="M.5 5.500l5-5 5 5"/></svg>
            <svg class="w-[14px] h-[10px] ml-[8px] shrink-0" viewBox="0 0 14 10" fill="none" stroke="#eee"><path d="M4 2.500h8v6H3v-4M12.500 4.500h1v2h-1M.5.500h3v2.500h-3z"/></svg>
            <svg class="w-[11px] h-[11px] ml-[8px] shrink-0" viewBox="0 0 11 11" fill="none" stroke="#ccc"><path d="M.5 10.500A10 10 0 0 1 10.500.5M3.500 10.500a7 7 0 0 1 7-7M6.500 10.500a4 4 0 0 1 4-4"/><path d="M9 9h2v2H9z" fill="#fff" stroke="none"/></svg>
            <svg class="w-[13px] h-[11px] ml-[7px] shrink-0" viewBox="0 0 13 11" fill="none" stroke="#ddd"><path d="M.5 3.500h2l3-3v10l-3-3h-2zM7.500 3.500c1 1 1 3 0 4M9.300 2c2 2 2 5 0 7M11 .5c2.500 3 2.500 7 0 10"/></svg>
            <div class="ml-[9px] shrink-0 text-[10.500px]"><span data-w="19">ENG</span></div>
            <div class="ml-[11px] shrink-0 flex flex-col text-[10.500px] leading-[15px]">
                <span class="ml-[13px]" data-w="10">01</span>
                <span data-w="25">09/05</span>
            </div>
        </div>
        <div class="absolute left-[163px] bottom-0 w-[29px] h-[2px] bg-[#76b0e6]"></div>
        <div class="absolute left-[236px] bottom-0 w-[29px] h-[2px] bg-[#76b0e6]"></div>
    </footer>
</div>

<!-- Annotation -->
<div class="absolute left-[743px] top-[592px] w-[260px] h-[128px] text-white text-[17px]">
    <svg class="absolute inset-0 w-[260px] h-[134px] overflow-visible drop-shadow-[2px_2px_5px_rgba(0,0,0,0.4)]" viewBox="0 0 260 134"><path d="M5 0h249q5 0 5 5L257 134H4L.5 5q0-5 4.500-5z" fill="#fd4040"/></svg>
    <div class="relative pt-[7px] pr-px flex flex-col items-center leading-[19.700px]">
        <span data-w="181">هنا ننتبه أثناء حذف العمود</span>
        <span data-w="226">سنفقد الخلايا المعدلة بسبب أنهم</span>
        <span data-w="203">مرتبطين بالعمود المحذوف عن</span>
        <span data-w="226">طريق المعادلة ولحل هذه المشكلة</span>
        <span data-w="218">نقوم بتراجع ونسخ القيم الجديدة</span>
        <span data-w="187">ولصقهم كقيم كما هو موضح</span>
    </div>
</div>
</div>

<script>
    const departments = {
        food: ['الأمن الغذائي', 73], goods: ['المواد الغير غذائية', 106], health: ['الصحة', 41],
        protection: ['الحماية', 44], monitoring: ['المراقبة والتقييم', 96], it: ['تكنولوجيا المعلومات', 124],
        finance: ['المالي', 32], logistics: ['اللوجستي', 56], wash: ['الإصحاح', 53]
    };
    const employees = [
        ['food', '01/01/2000', '2371', '7'],
        ['food', '24/02/2007', '1711', '9'],
        ['goods', '20/01/2010', '1899', '8'],
        ['food', '31/01/2011', '2139', '7'],
        ['food', '10/05/1999', '2181', '7'],
        ['health', '27/08/2000', '918', '1'],
        ['protection', '31/03/2006', '1940', '13'],
        ['monitoring', '10/01/2012', '2237', '9'],
        ['it', '21/09/2011', '1167', '3'],
        ['food', '13/02/2011', '780', '4'],
        ['finance', '03/08/1999', '1043', '5'],
        ['finance', '21/08/1998', '1078', '5'],
        ['it', '03/08/2010', '1126', '3'],
        ['logistics', '31/01/1998', '896', '4'],
        ['wash', '26/02/2010', '2406', '4'],
        ['finance', '26/10/2010', '2210', '6'],
        ['protection', '06/07/1998', '1043', '3'],
        ['finance', '21/03/2003', '2355', '10'],
        ['finance', '10/09/2007', '2461', '12']
    ];
    const rowClass = 'h-[23.35px] grid grid-cols-[34px_136px_117px_123px_95px_92px_112px_161px_329px_5px] leading-[22px]';
    const numClass = 'bg-[#d9d9d9] text-[#2a5f47] border-b border-[#c3c3c3] border-r-2 border-r-[#217346] flex items-center justify-center';
    const cell = 'border-b border-r border-[#d9d9d9] flex items-center pr-[2px] justify-end';
    const head = 'bg-[#f9c691] border-b border-r border-b-[#555] border-r-[#a98a68] font-bold flex items-center justify-end pr-[2px] text-[15.500px]';

    // Column letters
    const heads = document.getElementById('heads');
    heads.innerHTML = '<div class="flex justify-end items-end pr-[2px] pb-[2px]"><svg class="w-[18px] h-[18px]" viewBox="0 0 18 18"><path d="M18 0v18H0z" fill="#b1b1b1"/></svg></div>' +
        ['D', 'E', 'F', 'G', 'H', 'I', 'J', 'K', ''].map(letter => letter === 'E'
            ? '<div class="bg-[#d0eedd] text-[#217346] border-x border-[#9fbfae] flex items-center justify-center pr-[2px]">E</div>'
            : `<div class="border-r border-[#bdbdbd] flex items-center justify-center">${letter}</div>`).join('');

    // Row 1
    let html = `<div class="${rowClass}">
        <div class="${numClass}">1</div>
        <div class="${head}"><span data-w="39">القسم</span></div>
        <div class="${head}"></div>
        <div class="${head}"><span data-w="71">بداية العمل</span></div>
        <div class="${head}"><span data-w="45">المرتب</span></div>
        <div class="${head}"><span data-w="73">تقييم العمل</span></div>
        <div class="border-b border-r border-[#444]"></div>
        <div class="${cell}"></div>
        <div class="border-r border-[#d9d9d9]"></div>
        <div class="border-b border-[#d9d9d9]"></div>
    </div>`;

    // Data rows
    employees.forEach(([dept, date, salary, score], i) => {
        const [name, width] = departments[dept];
        let j = `<div class="${cell}"></div>`;
        let k = `<div class="${cell}"></div>`;
        if (i < 8) {
            j = '<div class="border-b border-[#d9d9d9]"></div>';
            k = '<div></div>';
        }
        if (i === 0) k = '<div class="border-b border-[#e4e4e4]"></div>';
        if (i === 1) k = '<div class="bg-[#edd47c] flex items-center justify-end pr-[3px]"><span data-w="316">حذف الفراغات الزائدة في الخلايا في عمود طبيعة العمل</span></div>';
        html += `<div class="${rowClass}">
            <div class="${numClass}">${i + 2}</div>
            <div class="${cell}"><span data-w="${width}">${name}</span></div>
            <div class="relative bg-[#c3c3c3] border-b border-[#acacac] flex items-center justify-center pr-[2px]"><svg class="absolute left-[1px] top-0 w-[6px] h-[6px]" viewBox="0 0 6 6"><path d="M0 0h6L0 6z" fill="#12691f"/></svg><span data-w="42">#REF!</span></div>
            <div class="${cell}"><span data-w="89">${date}</span></div>
            <div class="${cell}"><span data-w="${salary.length * 9.4}">${salary}</span></div>
            <div class="border-b border-r border-[#d9d9d9] flex items-center justify-center"><span data-w="${score.length * 9.4}">${score}</span></div>
            <div class="${cell}"></div>
            ${j}${k}
            <div class="border-b border-[#d9d9d9]"></div>
        </div>`;
    });
    document.getElementById('rows').innerHTML = html;

    const fit = el => {
        const natural = el.offsetWidth;
        if (!natural) return;
        const w = Number(el.dataset.w);
        el.style.transform = `scaleX(${w / natural})`;
        el.style.marginRight = `${w - natural}px`;
    };
    const observer = new ResizeObserver(entries => entries.forEach(entry => fit(entry.target)));
    document.querySelectorAll('[data-w]').forEach(el => {
        el.style.display = 'inline-block';
        el.style.whiteSpace = 'nowrap';
        el.style.flexShrink = 0;
        el.style.width = 'max-content';
        el.style.transformOrigin = 'left';
        fit(el);
        observer.observe(el);
    });
    window.addEventListener('load', () => document.querySelectorAll('[data-w]').forEach(fit));
</script>
</body>
</html>
